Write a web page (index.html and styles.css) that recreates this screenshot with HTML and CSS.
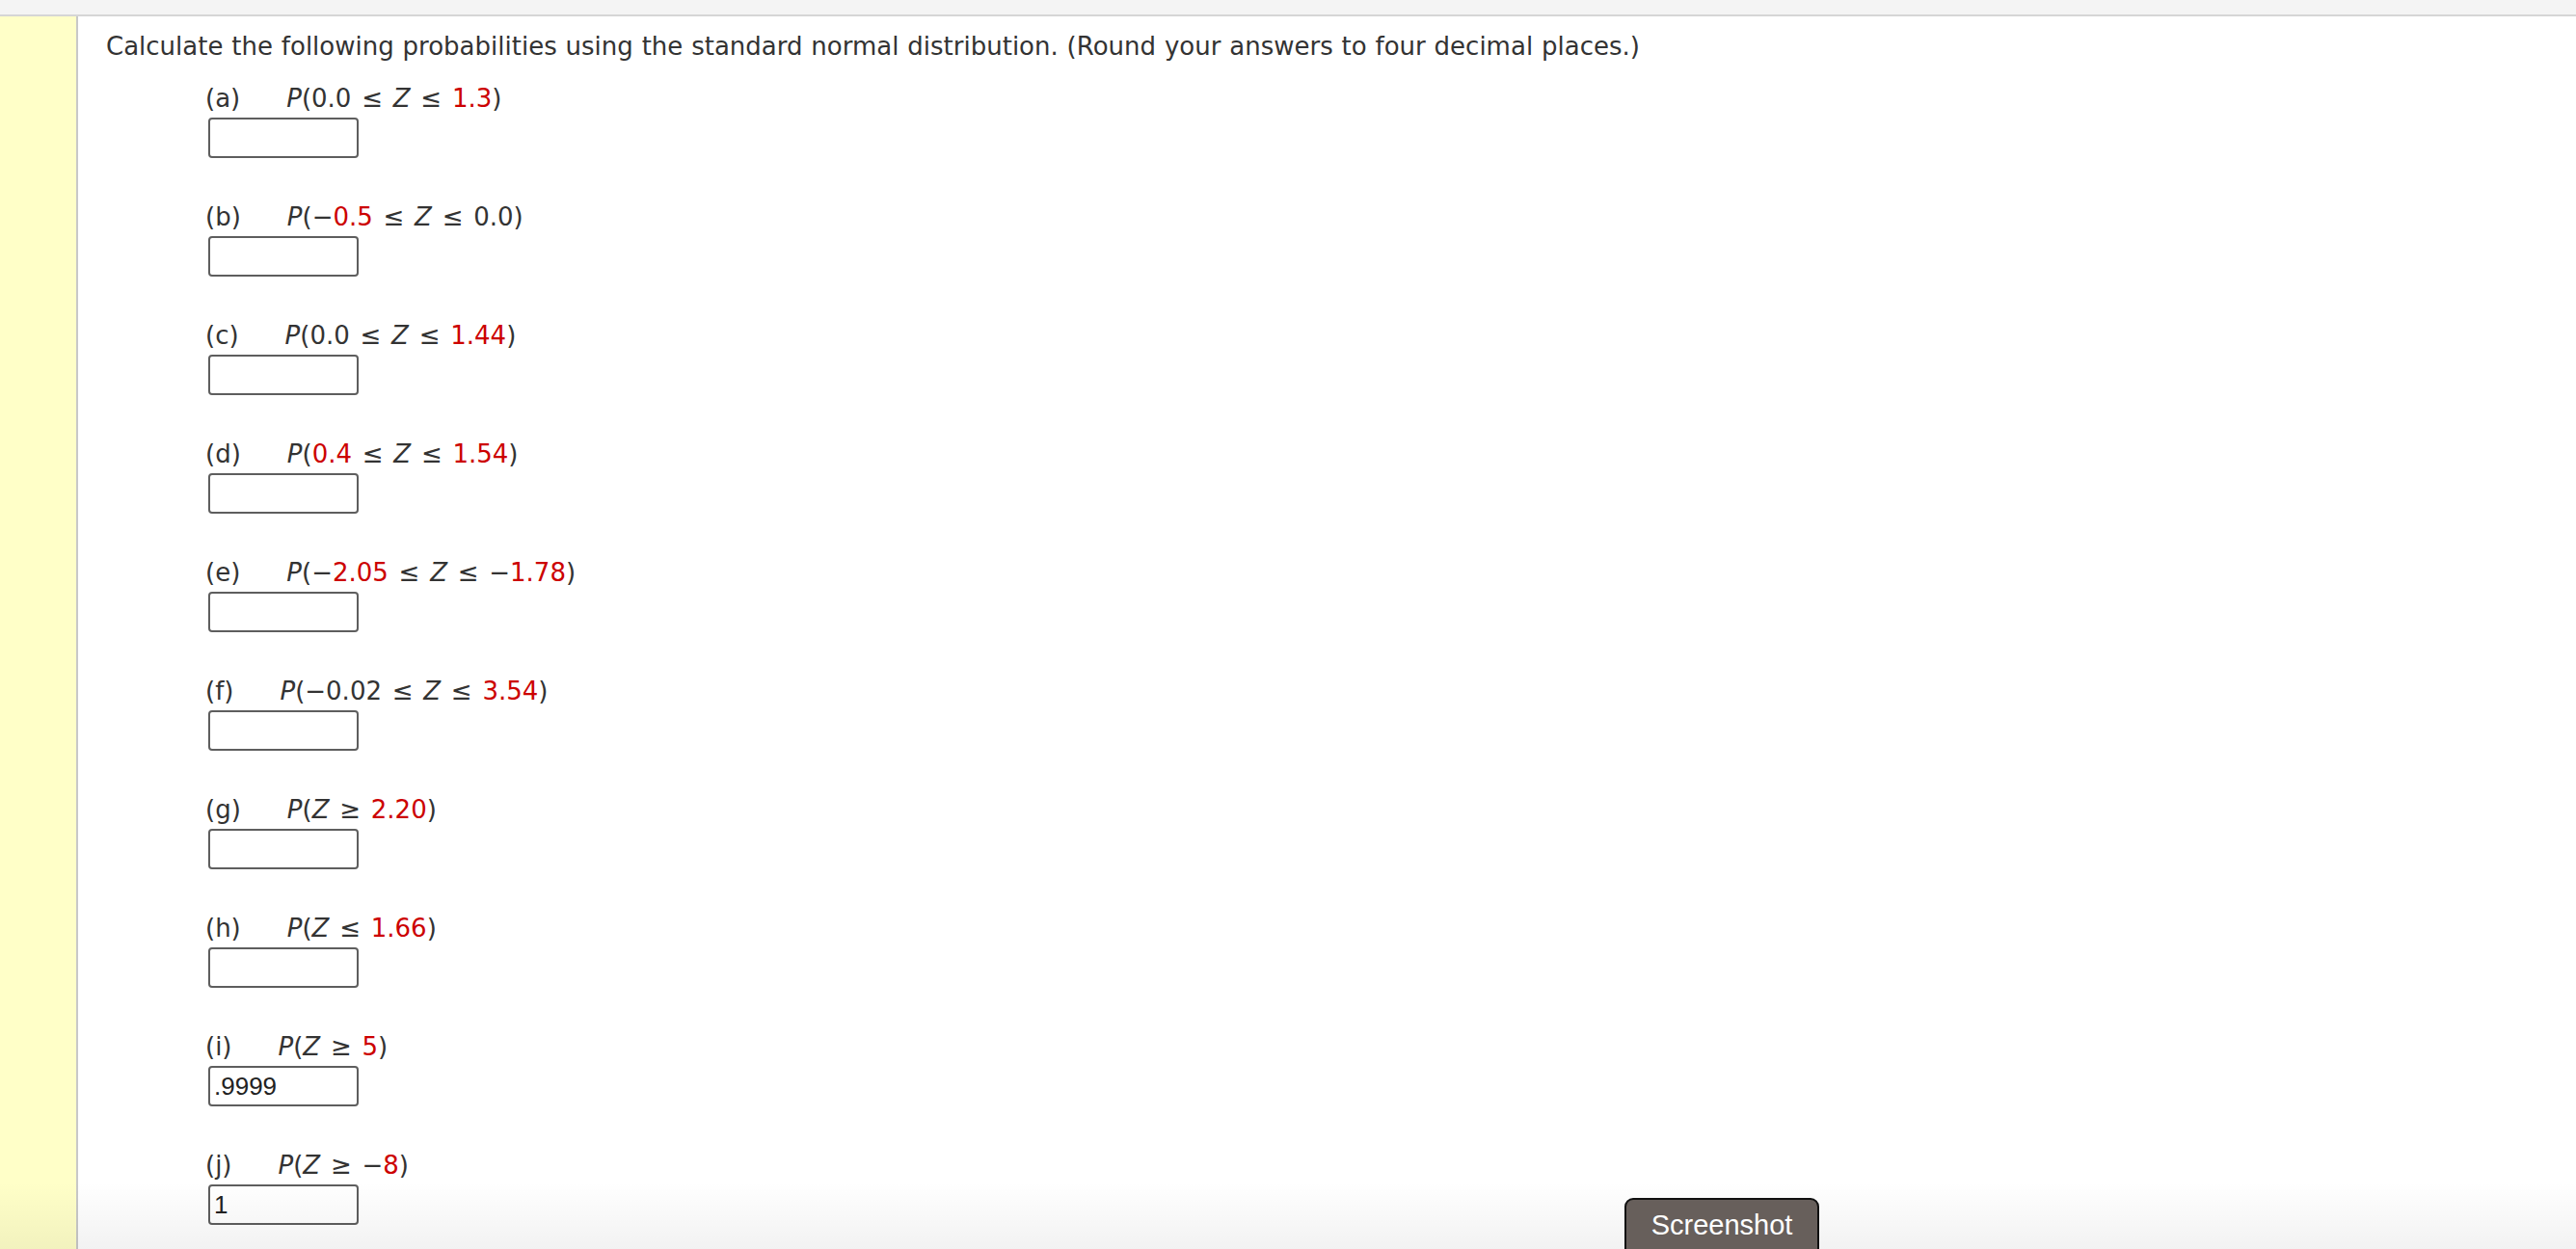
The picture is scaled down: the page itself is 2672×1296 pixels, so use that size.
FILE: index.html
```html
<!DOCTYPE html>
<html>
<head>
<meta charset="utf-8">
<link rel="stylesheet" href="styles.css">
</head>
<body>
<div class="topbar"></div>
<div class="page">
  <div class="sidebar"></div>
  <div class="content">
    <p class="intro">Calculate the following probabilities using the standard normal distribution. (Round your answers to four decimal places.)</p>
    <ol class="parts">
      <li class="part">
        <div class="q"><span class="lbl">(a)</span><span class="m"><i>P</i>(0.0 ≤ <i>Z</i> ≤ <span class="r">1.3</span>)</span></div>
        <input class="ans" type="text" value="">
      </li>
      <li class="part">
        <div class="q"><span class="lbl">(b)</span><span class="m"><i>P</i>(−<span class="r">0.5</span> ≤ <i>Z</i> ≤ 0.0)</span></div>
        <input class="ans" type="text" value="">
      </li>
      <li class="part">
        <div class="q"><span class="lbl">(c)</span><span class="m"><i>P</i>(0.0 ≤ <i>Z</i> ≤ <span class="r">1.44</span>)</span></div>
        <input class="ans" type="text" value="">
      </li>
      <li class="part">
        <div class="q"><span class="lbl">(d)</span><span class="m"><i>P</i>(<span class="r">0.4</span> ≤ <i>Z</i> ≤ <span class="r">1.54</span>)</span></div>
        <input class="ans" type="text" value="">
      </li>
      <li class="part">
        <div class="q"><span class="lbl">(e)</span><span class="m"><i>P</i>(−<span class="r">2.05</span> ≤ <i>Z</i> ≤ −<span class="r">1.78</span>)</span></div>
        <input class="ans" type="text" value="">
      </li>
      <li class="part">
        <div class="q"><span class="lbl">(f)</span><span class="m"><i>P</i>(−0.02 ≤ <i>Z</i> ≤ <span class="r">3.54</span>)</span></div>
        <input class="ans" type="text" value="">
      </li>
      <li class="part">
        <div class="q"><span class="lbl">(g)</span><span class="m"><i>P</i>(<i>Z</i> ≥ <span class="r">2.20</span>)</span></div>
        <input class="ans" type="text" value="">
      </li>
      <li class="part">
        <div class="q"><span class="lbl">(h)</span><span class="m"><i>P</i>(<i>Z</i> ≤ <span class="r">1.66</span>)</span></div>
        <input class="ans" type="text" value="">
      </li>
      <li class="part">
        <div class="q"><span class="lbl">(i)</span><span class="m"><i>P</i>(<i>Z</i> ≥ <span class="r">5</span>)</span></div>
        <input class="ans" type="text" value=".9999">
      </li>
      <li class="part">
        <div class="q"><span class="lbl">(j)</span><span class="m"><i>P</i>(<i>Z</i> ≥ −<span class="r">8</span>)</span></div>
        <input class="ans" type="text" value="1">
      </li>
    </ol>
  </div>
</div>
<div class="shade"></div>
<div class="shot-btn">Screenshot</div>
</body>
</html>
```
FILE: styles.css
```css
html, body {
  margin: 0;
  padding: 0;
  height: 100%;
  overflow: hidden;
  background: #ffffff;
}
body {
  font-family: "DejaVu Sans", Verdana, sans-serif;
  color: #333333;
  position: relative;
}
.topbar {
  height: 15px;
  background: #f4f4f4;
  border-bottom: 2px solid #d6d6d6;
}
.page {
  display: flex;
  height: calc(100% - 17px);
}
.sidebar {
  width: 79px;
  flex: none;
  background: #ffffc8;
  border-right: 2px solid #c8c8c8;
}
.content {
  flex: 1;
  padding: 14px 0 0 29px;
}
.intro {
  margin: 0;
  font-size: 26px;
  line-height: 34px;
  word-spacing: 0.6px;
}
.parts {
  list-style: none;
  margin: 20px 0 0 0;
  padding: 0 0 0 103px;
}
.part {
  margin: 0 0 44px 0;
}
.q {
  font-size: 26px;
  line-height: 34px;
  white-space: nowrap;
}
.lbl {
  margin-right: 48px;
}
.m {
  word-spacing: 2.5px;
}
.m i {
  font-style: italic;
}
.r {
  color: #cc0000;
}
.ans {
  display: block;
  box-sizing: border-box;
  width: 156px;
  height: 42px;
  margin: 3px 0 0 3px;
  padding: 0 0 0 4px;
  border: 2px solid #5e5e5e;
  border-radius: 4px;
  background: #ffffff;
  font-family: "Liberation Sans", Arial, sans-serif;
  font-size: 26px;
  color: #222222;
  outline: none;
}
.shade {
  position: absolute;
  left: 0;
  right: 0;
  bottom: 0;
  height: 70px;
  background: linear-gradient(to bottom, rgba(0,0,0,0), rgba(0,0,0,0.05));
  pointer-events: none;
}
.shot-btn {
  position: absolute;
  left: 1685px;
  top: 1243px;
  width: 202px;
  height: 66px;
  box-sizing: border-box;
  border: 2px solid #111111;
  border-radius: 9px;
  background: #675f5b;
  color: #ffffff;
  font-family: "Liberation Sans", Arial, sans-serif;
  font-size: 29px;
  line-height: 36px;
  padding-top: 8px;
  text-align: center;
}
```
